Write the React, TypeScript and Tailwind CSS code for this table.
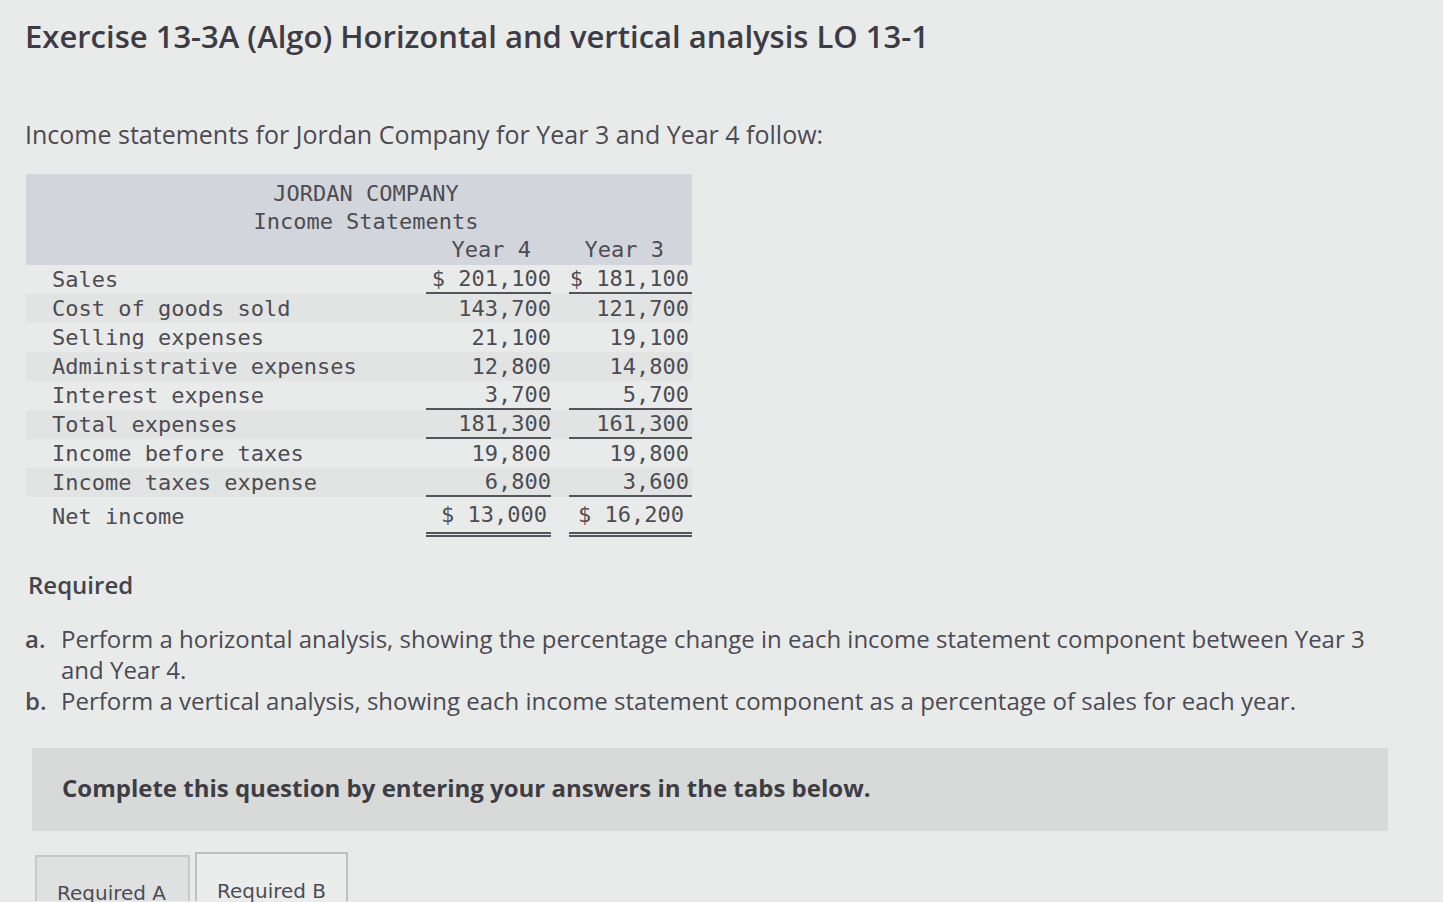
import React from "react";

const rows = [
  { label: "Sales", y4: "$ 201,100", y3: "$ 181,100", line: true, stripe: false },
  { label: "Cost of goods sold", y4: "143,700", y3: "121,700", line: false, stripe: true },
  { label: "Selling expenses", y4: "21,100", y3: "19,100", line: false, stripe: false },
  { label: "Administrative expenses", y4: "12,800", y3: "14,800", line: false, stripe: true },
  { label: "Interest expense", y4: "3,700", y3: "5,700", line: true, stripe: false },
  { label: "Total expenses", y4: "181,300", y3: "161,300", line: true, stripe: true },
  { label: "Income before taxes", y4: "19,800", y3: "19,800", line: false, stripe: false },
  { label: "Income taxes expense", y4: "6,800", y3: "3,600", line: true, stripe: true },
];

export default function App() {
  return (
    <div className="h-[902px] w-[1443px] overflow-hidden bg-[#e9eaea] text-[#4a4a50]" style={{ fontFamily: "'Open Sans', sans-serif" }}>
      <div className="pl-[25px] pt-[16px]">
        <h1 className="text-[31px] font-semibold leading-[40px] text-[#3d3c44]">
          Exercise 13-3A (Algo) Horizontal and vertical analysis LO 13-1
        </h1>
        <p className="mt-[62px] text-[25px] leading-[32px] text-[#4c4b52]">
          Income statements for Jordan Company for Year 3 and Year 4 follow:
        </p>
      </div>

      <div className="ml-[26px] mt-[24px] w-[666px] whitespace-nowrap text-[22px] leading-[28px] text-[#4d4c52]" style={{ fontFamily: "'DejaVu Sans Mono', monospace" }}>
        <div className="bg-[#d2d6dc] pt-[6px] pb-[1px]">
          <div className="w-[680px] text-center">JORDAN COMPANY</div>
          <div className="w-[680px] text-center">Income Statements</div>
          <div className="flex">
            <div className="w-[400px]" />
            <div className="w-[125px] pr-[20px] text-right">Year 4</div>
            <div className="w-[18px]" />
            <div className="w-[123px] pr-[28px] text-right">Year 3</div>
          </div>
        </div>
        {rows.map((r) => (
          <div key={r.label} className={`flex h-[29px] items-center ${r.stripe ? "bg-[#e2e3e3]" : ""}`}>
            <div className="w-[400px] pl-[26px]">{r.label}</div>
            <div className={`flex h-full w-[125px] items-center justify-end ${r.line ? "border-b-2 border-[#55545a]" : ""}`}>{r.y4}</div>
            <div className="w-[18px]" />
            <div className={`flex h-full w-[123px] items-center justify-end pr-[3px] ${r.line ? "border-b-2 border-[#55545a]" : ""}`}>{r.y3}</div>
          </div>
        ))}
        <div className="flex h-[40px] items-center">
          <div className="w-[400px] pl-[26px]">Net income</div>
          <div className="flex h-full w-[125px] items-center justify-end border-b-[5px] border-double border-[#55545a] pr-[4px]">$ 13,000</div>
          <div className="w-[18px]" />
          <div className="flex h-full w-[123px] items-center justify-end border-b-[5px] border-double border-[#55545a] pr-[8px]">$ 16,200</div>
        </div>
      </div>

      <div className="w-[1400px] pl-[25px]">
        <h2 className="mt-[32px] pl-[3px] text-[24px] font-semibold leading-[32px] text-[#45444b]">Required</h2>
        <ol className="mt-[22px] text-[24px] leading-[31px] text-[#4c4b52]">
          <li className="flex">
            <span className="w-[36px] shrink-0 font-semibold">a.</span>
            <span>Perform a horizontal analysis, showing the percentage change in each income statement component between Year 3 and Year 4.</span>
          </li>
          <li className="flex">
            <span className="w-[36px] shrink-0 font-semibold">b.</span>
            <span>Perform a vertical analysis, showing each income statement component as a percentage of sales for each year.</span>
          </li>
        </ol>
      </div>

      <div className="ml-[32px] mt-[32px] h-[83px] w-[1356px] bg-[#d8d9d9] pl-[30px] pt-[26px]">
        <p className="text-[24px] font-bold leading-[28px] text-[#3e3d43]">
          Complete this question by entering your answers in the tabs below.
        </p>
      </div>

      <div className="ml-[35px] mt-[21px] flex items-end gap-[5px] text-[20px] text-[#4e4d53]" style={{ fontFamily: "'DejaVu Sans', sans-serif" }}>
        <div className="h-[46px] w-[155px] border-2 border-b-0 border-[#c8c9c9] bg-[#dfe0e0] pl-[20px] pt-[24px] leading-[24px]">Required A</div>
        <div className="h-[49px] w-[153px] border-2 border-b-0 border-[#bfc0c0] bg-[#ebecec] pl-[20px] pt-[25px] leading-[24px]">Required B</div>
      </div>
    </div>
  );
}
